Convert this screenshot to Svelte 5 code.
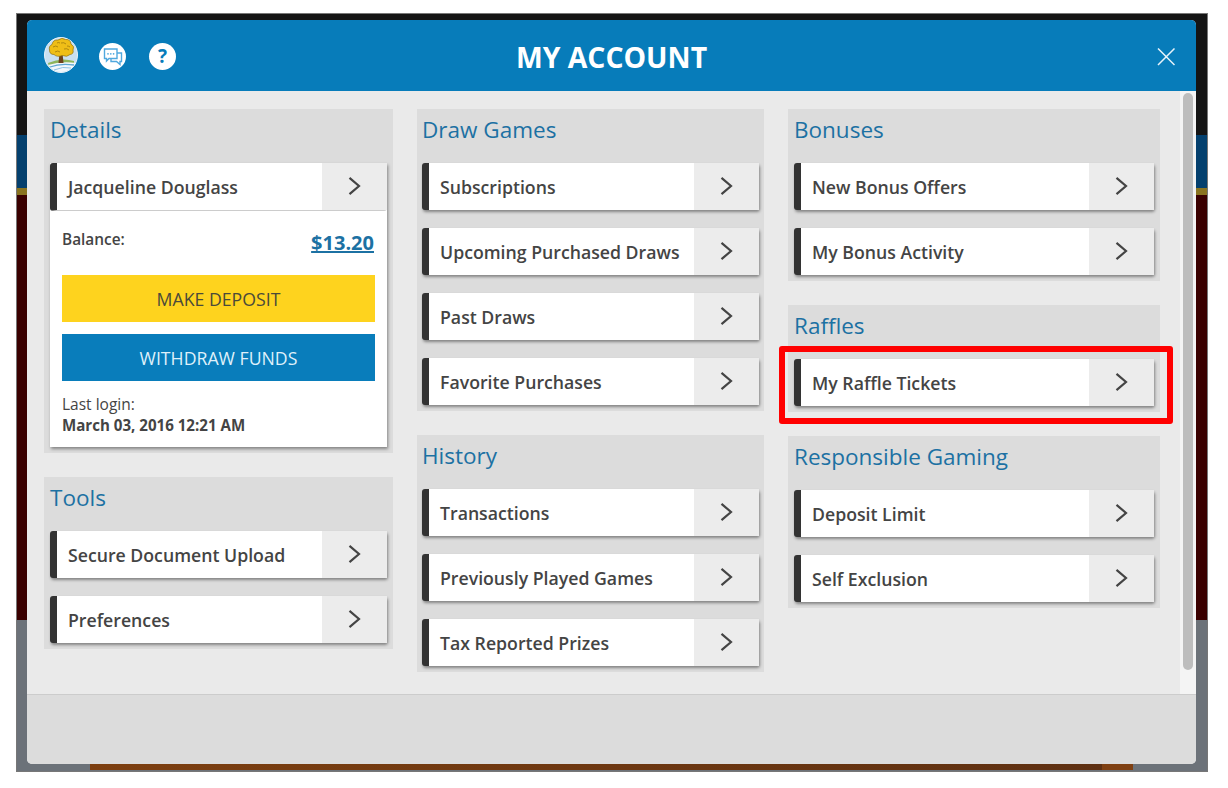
<script>
  const draw = ['Subscriptions', 'Upcoming Purchased Draws', 'Past Draws', 'Favorite Purchases'];
  const history = ['Transactions', 'Previously Played Games', 'Tax Reported Prizes'];
  const tools = ['Secure Document Upload', 'Preferences'];
  const bonuses = ['New Bonus Offers', 'My Bonus Activity'];
  const gaming = ['Deposit Limit', 'Self Exclusion'];
</script>

{#snippet chevron()}
  <span class="go">
    <svg width="14" height="20" viewBox="0 0 14 20">
      <path d="M1.5 1.8 L11 10 L1.5 18.2" fill="none" stroke="#444" stroke-width="2.2" />
    </svg>
  </span>
{/snippet}

{#snippet row(label)}
  <a class="row" href="#top">
    <span class="label">{label}</span>
    {@render chevron()}
  </a>
{/snippet}

{#snippet panel(title, items)}
  <section class="panel">
    <h2>{title}</h2>
    <div class="rows">
      {#each items as item}
        {@render row(item)}
      {/each}
    </div>
  </section>
{/snippet}

<div class="frame">
  <div class="modal">
    <header>
      <div class="icons">
        <svg class="logo" width="36" height="38" viewBox="0 0 36 38">
          <ellipse cx="18" cy="19" rx="16.5" ry="17.5" fill="#c9dff0" stroke="#e8f2f9" stroke-width="1" />
          <path d="M5 27 Q18 21 31 25 L31 29 Q18 27 6 31 Z" fill="#8db55c" />
          <path d="M5 29 Q18 25 33 27 Q29 35 18 36 Q9 35 5 29 Z" fill="#f2f7fb" />
          <path d="M7 31 Q17 27 31 29" fill="none" stroke="#5fa6d4" stroke-width="1.3" />
          <path d="M11 34 Q20 30 28 32" fill="none" stroke="#8cc2e4" stroke-width="1" />
          <path d="M16.5 17 L15.5 27 L20.5 27 L19.5 17 Z" fill="#6e421c" />
          <path d="M6.5 14 Q5.5 10 9 8.5 Q10 3.5 15 4 Q19 1 22.5 3.5 Q27.5 3 28 8 Q32 10.5 30 14 Q31 18 27 18.5 Q24 21.5 19.5 19.5 Q14 21.5 11 18.5 Q6.5 18.5 6.5 14 Z" fill="#efbe17" stroke="#8f7010" stroke-width=".7" />
          <path d="M10 11 Q13 9 15 11 M18 7 Q21 6 23 8 M21 13 Q24 12 26 14 M12 16 Q15 14 17 16 M14 7 Q15 6 17 7 M24 10 Q26 10 27 11" fill="none" stroke="#a8820f" stroke-width=".9" />
        </svg>
        <span class="round chat">
          <svg width="20" height="19" viewBox="0 0 20 19">
            <path d="M1.5 2 H14 V11.5 H6 L3.5 14 V11.5 H1.5 Z" fill="none" stroke="#4fa8de" stroke-width="1.4" />
            <path d="M14 6 H18.5 V14.5 H17 V17.5 L13.5 14.5 H8 V11.5" fill="none" stroke="#4fa8de" stroke-width="1.4" />
            <circle cx="5" cy="6.8" r=".85" fill="#4fa8de" />
            <circle cx="7.8" cy="6.8" r=".85" fill="#4fa8de" />
            <circle cx="10.6" cy="6.8" r=".85" fill="#4fa8de" />
          </svg>
        </span>
        <span class="round help">?</span>
      </div>
      <h1>MY ACCOUNT</h1>
      <svg class="close" width="18" height="18" viewBox="0 0 18 18">
        <path d="M1 0.5 L17.5 17 M17.5 0.5 L1 17" stroke="#e8f3fa" stroke-width="1.5" fill="none" />
      </svg>
    </header>

    <div class="content">
      <div class="columns">
        <div class="col one">
          <section class="panel">
            <h2>Details</h2>
            <div class="card">
              <a class="row flat" href="#top">
                <span class="label">Jacqueline Douglass</span>
                {@render chevron()}
              </a>
              <div class="info">
                <div class="balance">
                  <span>Balance:</span>
                  <a href="#top">$13.20</a>
                </div>
                <button class="deposit">MAKE DEPOSIT</button>
                <button class="withdraw">WITHDRAW FUNDS</button>
                <p class="login">Last login:<br /><strong>March 03, 2016 12:21 AM</strong></p>
              </div>
            </div>
          </section>
          {@render panel('Tools', tools)}
        </div>
        <div class="col two">
          {@render panel('Draw Games', draw)}
          {@render panel('History', history)}
        </div>
        <div class="col three">
          {@render panel('Bonuses', bonuses)}
          {@render panel('Raffles', ['My Raffle Tickets'])}
          {@render panel('Responsible Gaming', gaming)}
        </div>
      </div>
      <div class="track"><div class="thumb"></div></div>
    </div>

    <footer></footer>
    <div class="callout"></div>
  </div>
  <div class="strip"></div>
</div>

<style>
  :global(body) {
    background: #fff;
    font-family: "Open Sans", "Noto Sans", sans-serif;
  }

  .frame {
    position: relative;
    box-sizing: border-box;
    width: 1192px;
    height: 759px;
    margin: 13px 0 0 16px;
    padding: 6px 11px 7px 10px;
    border: 1px solid #777;
    background: linear-gradient(
      #141414 0 121px,
      #04406e 121px 174px,
      #8a7420 174px 181px,
      #3a0000 181px 606px,
      #6c7279 606px
    );
  }

  .strip {
    position: absolute;
    left: 73px;
    right: 74px;
    bottom: 1px;
    height: 6px;
    background: linear-gradient(90deg, #7d3f10, #5e3012 97%, #7f4012 97%);
  }

  .modal {
    position: relative;
    z-index: 1;
    display: flex;
    flex-direction: column;
    height: 100%;
    border-radius: 5px;
    overflow: hidden;
    background: #eaeaea;
  }

  header {
    position: relative;
    display: flex;
    align-items: center;
    justify-content: center;
    flex: 0 0 71px;
    background: #077cba;
  }

  .icons {
    position: absolute;
    left: 16px;
    top: 16px;
    display: flex;
    align-items: center;
    gap: 20px;
  }

  .round {
    display: flex;
    align-items: center;
    justify-content: center;
    width: 27px;
    height: 27px;
    margin-top: 2px;
    border-radius: 50%;
    background: #fff;
  }

  .chat {
    margin-right: 3px;
  }

  .help {
    color: #077cba;
    font-size: 19px;
    font-weight: 700;
  }

  h1 {
    margin: 2px 0 0;
    color: #fff;
    font-size: 28.4px;
    font-weight: 700;
  }

  .close {
    position: absolute;
    right: 21px;
    top: 28px;
  }

  .content {
    position: relative;
    flex: 1;
    min-height: 0;
    padding: 18px 0 0 17px;
  }

  .columns {
    display: flex;
    gap: 24px;
  }

  .col {
    display: flex;
    flex-direction: column;
    gap: 24px;
  }

  .one { width: 349px; }
  .two { width: 347px; }
  .three { width: 372px; }

  .panel {
    padding: 0 6px 6px;
    background: #dcdcdc;
  }

  .two .panel {
    padding: 0 5px 6px;
  }

  h2 {
    height: 54px;
    margin: 0;
    color: #1c71a3;
    font-size: 22.5px;
    font-weight: 400;
    line-height: 42px;
  }

  .rows {
    display: flex;
    flex-direction: column;
    gap: 18px;
  }

  .row {
    display: flex;
    height: 47px;
    border-left: 7px solid #333;
    border-radius: 3px;
    background: #fff;
    box-shadow: 1px 2px 3px rgba(0, 0, 0, .4);
    color: #444;
    text-decoration: none;
  }

  .row.flat {
    border-bottom: 1px solid #ccc;
    box-shadow: none;
  }

  .label {
    flex: 1;
    padding-left: 11px;
    font-size: 17.7px;
    font-weight: 600;
    line-height: 48px;
  }

  .go {
    display: flex;
    align-items: center;
    justify-content: center;
    width: 65px;
    background: #ececec;
  }

  .go svg {
    margin-top: -1px;
  }

  .card {
    background: #fff;
    box-shadow: 1px 2px 3px rgba(0, 0, 0, .4);
  }

  .info {
    padding: 0 12px;
    color: #444;
  }

  .balance {
    display: flex;
    justify-content: space-between;
    height: 64px;
    padding: 18px 1px 0 0;
    box-sizing: border-box;
    font-size: 15.4px;
    font-weight: 600;
  }

  .balance a {
    color: #1c71a3;
    font-size: 20px;
    font-weight: 700;
  }

  button {
    display: block;
    width: 100%;
    height: 47px;
    margin-bottom: 12px;
    border: 0;
    font-family: inherit;
    font-size: 17.7px;
  }

  .deposit {
    background: #fed31e;
    color: #4a4a3a;
  }

  .withdraw {
    background: #097dbb;
    color: #dff0fa;
  }

  .login {
    margin: 0;
    padding: 1px 0 11px;
    font-size: 15.5px;
    line-height: 21px;
  }

  .login strong {
    font-size: 15.1px;
    font-weight: 700;
  }

  .track {
    position: absolute;
    right: 0;
    top: 0;
    bottom: 0;
    width: 16px;
    background: #f4f4f4;
  }

  .thumb {
    width: 10px;
    height: 577px;
    margin: 2px 0 0 3px;
    border-radius: 5px;
    background: #bdbdbd;
  }

  footer {
    flex: 0 0 70px;
    box-sizing: border-box;
    border-top: 1px solid #ccc;
    background: #dcdcdc;
  }

  .callout {
    position: absolute;
    left: 752px;
    top: 326px;
    width: 394px;
    height: 78px;
    box-sizing: border-box;
    border: 6px solid #f00;
    border-radius: 3px;
  }
</style>
